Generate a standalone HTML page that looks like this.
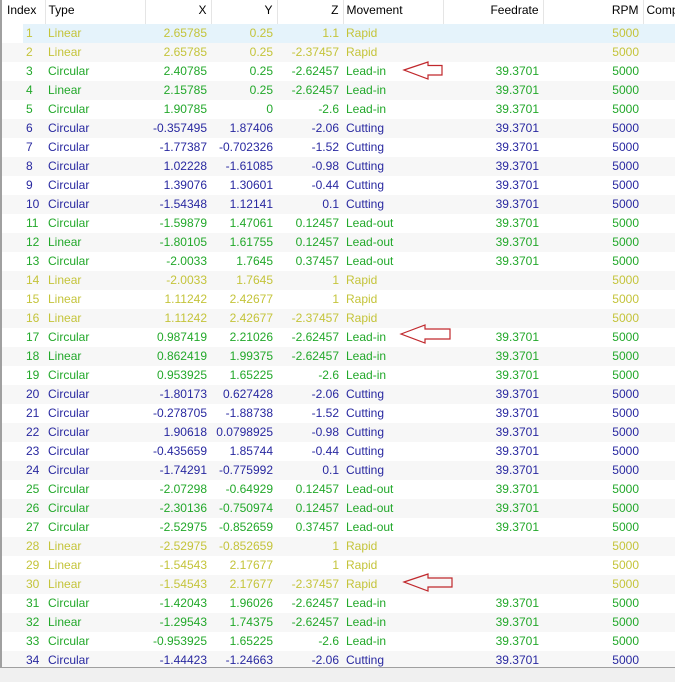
<!DOCTYPE html>
<html><head><style>
body{margin:0;width:675px;height:682px;background:#f0f0f0;overflow:hidden;font-family:"Liberation Sans",sans-serif;font-size:12px;position:relative}
#g{position:absolute;left:0;top:0;width:675px;height:668px;background:#fff;border-left:2px solid #a0a0a0;border-bottom:1px solid #a0a0a0;box-sizing:border-box;overflow:hidden}
table{border-collapse:collapse;table-layout:fixed;position:absolute;left:0;top:0;width:681px}
td,th{height:19px;padding:0;white-space:nowrap;overflow:hidden;line-height:19px}
th{height:24px;line-height:20px;vertical-align:top;font-weight:normal;color:#000;border-right:1px solid #e5e5e5;text-align:left;padding-left:3px}
th.r{text-align:right;padding-right:4px;padding-left:0}
td{text-align:right;padding-right:4px}
td.l{text-align:left;padding-left:3px;padding-right:0}
td.i{text-align:left;padding-left:24px;padding-right:0}
tr:nth-child(odd) td{background:#f7f7f7}
tr.sel td{background:#e5f3fb}
tr.sel td.i{background:linear-gradient(90deg,#fff 21px,#e5f3fb 21px)}
.Y td{color:#c4c43a}.G td{color:#22a82a}.B td{color:#2828a0}
svg{position:absolute;left:0;top:0}
</style></head><body><div id="g">
<table>
<colgroup><col style="width:43px"><col style="width:100px"><col style="width:66px"><col style="width:66px"><col style="width:66px"><col style="width:100px"><col style="width:100px"><col style="width:100px"><col style="width:40px"></colgroup>
<tr><th style="padding-left:5px">Index</th><th>Type</th><th class="r">X</th><th class="r">Y</th><th class="r">Z</th><th>Movement</th><th class="r">Feedrate</th><th class="r">RPM</th><th>Comp</th></tr>
<tr class="Y sel"><td class="i">1</td><td class="l">Linear</td><td>2.65785</td><td>0.25</td><td>1.1</td><td class="l">Rapid</td><td></td><td>5000</td><td></td></tr>
<tr class="Y"><td class="i">2</td><td class="l">Linear</td><td>2.65785</td><td>0.25</td><td>-2.37457</td><td class="l">Rapid</td><td></td><td>5000</td><td></td></tr>
<tr class="G"><td class="i">3</td><td class="l">Circular</td><td>2.40785</td><td>0.25</td><td>-2.62457</td><td class="l">Lead-in</td><td>39.3701</td><td>5000</td><td></td></tr>
<tr class="G"><td class="i">4</td><td class="l">Linear</td><td>2.15785</td><td>0.25</td><td>-2.62457</td><td class="l">Lead-in</td><td>39.3701</td><td>5000</td><td></td></tr>
<tr class="G"><td class="i">5</td><td class="l">Circular</td><td>1.90785</td><td>0</td><td>-2.6</td><td class="l">Lead-in</td><td>39.3701</td><td>5000</td><td></td></tr>
<tr class="B"><td class="i">6</td><td class="l">Circular</td><td>-0.357495</td><td>1.87406</td><td>-2.06</td><td class="l">Cutting</td><td>39.3701</td><td>5000</td><td></td></tr>
<tr class="B"><td class="i">7</td><td class="l">Circular</td><td>-1.77387</td><td>-0.702326</td><td>-1.52</td><td class="l">Cutting</td><td>39.3701</td><td>5000</td><td></td></tr>
<tr class="B"><td class="i">8</td><td class="l">Circular</td><td>1.02228</td><td>-1.61085</td><td>-0.98</td><td class="l">Cutting</td><td>39.3701</td><td>5000</td><td></td></tr>
<tr class="B"><td class="i">9</td><td class="l">Circular</td><td>1.39076</td><td>1.30601</td><td>-0.44</td><td class="l">Cutting</td><td>39.3701</td><td>5000</td><td></td></tr>
<tr class="B"><td class="i">10</td><td class="l">Circular</td><td>-1.54348</td><td>1.12141</td><td>0.1</td><td class="l">Cutting</td><td>39.3701</td><td>5000</td><td></td></tr>
<tr class="G"><td class="i">11</td><td class="l">Circular</td><td>-1.59879</td><td>1.47061</td><td>0.12457</td><td class="l">Lead-out</td><td>39.3701</td><td>5000</td><td></td></tr>
<tr class="G"><td class="i">12</td><td class="l">Linear</td><td>-1.80105</td><td>1.61755</td><td>0.12457</td><td class="l">Lead-out</td><td>39.3701</td><td>5000</td><td></td></tr>
<tr class="G"><td class="i">13</td><td class="l">Circular</td><td>-2.0033</td><td>1.7645</td><td>0.37457</td><td class="l">Lead-out</td><td>39.3701</td><td>5000</td><td></td></tr>
<tr class="Y"><td class="i">14</td><td class="l">Linear</td><td>-2.0033</td><td>1.7645</td><td>1</td><td class="l">Rapid</td><td></td><td>5000</td><td></td></tr>
<tr class="Y"><td class="i">15</td><td class="l">Linear</td><td>1.11242</td><td>2.42677</td><td>1</td><td class="l">Rapid</td><td></td><td>5000</td><td></td></tr>
<tr class="Y"><td class="i">16</td><td class="l">Linear</td><td>1.11242</td><td>2.42677</td><td>-2.37457</td><td class="l">Rapid</td><td></td><td>5000</td><td></td></tr>
<tr class="G"><td class="i">17</td><td class="l">Circular</td><td>0.987419</td><td>2.21026</td><td>-2.62457</td><td class="l">Lead-in</td><td>39.3701</td><td>5000</td><td></td></tr>
<tr class="G"><td class="i">18</td><td class="l">Linear</td><td>0.862419</td><td>1.99375</td><td>-2.62457</td><td class="l">Lead-in</td><td>39.3701</td><td>5000</td><td></td></tr>
<tr class="G"><td class="i">19</td><td class="l">Circular</td><td>0.953925</td><td>1.65225</td><td>-2.6</td><td class="l">Lead-in</td><td>39.3701</td><td>5000</td><td></td></tr>
<tr class="B"><td class="i">20</td><td class="l">Circular</td><td>-1.80173</td><td>0.627428</td><td>-2.06</td><td class="l">Cutting</td><td>39.3701</td><td>5000</td><td></td></tr>
<tr class="B"><td class="i">21</td><td class="l">Circular</td><td>-0.278705</td><td>-1.88738</td><td>-1.52</td><td class="l">Cutting</td><td>39.3701</td><td>5000</td><td></td></tr>
<tr class="B"><td class="i">22</td><td class="l">Circular</td><td>1.90618</td><td>0.0798925</td><td>-0.98</td><td class="l">Cutting</td><td>39.3701</td><td>5000</td><td></td></tr>
<tr class="B"><td class="i">23</td><td class="l">Circular</td><td>-0.435659</td><td>1.85744</td><td>-0.44</td><td class="l">Cutting</td><td>39.3701</td><td>5000</td><td></td></tr>
<tr class="B"><td class="i">24</td><td class="l">Circular</td><td>-1.74291</td><td>-0.775992</td><td>0.1</td><td class="l">Cutting</td><td>39.3701</td><td>5000</td><td></td></tr>
<tr class="G"><td class="i">25</td><td class="l">Circular</td><td>-2.07298</td><td>-0.64929</td><td>0.12457</td><td class="l">Lead-out</td><td>39.3701</td><td>5000</td><td></td></tr>
<tr class="G"><td class="i">26</td><td class="l">Circular</td><td>-2.30136</td><td>-0.750974</td><td>0.12457</td><td class="l">Lead-out</td><td>39.3701</td><td>5000</td><td></td></tr>
<tr class="G"><td class="i">27</td><td class="l">Circular</td><td>-2.52975</td><td>-0.852659</td><td>0.37457</td><td class="l">Lead-out</td><td>39.3701</td><td>5000</td><td></td></tr>
<tr class="Y"><td class="i">28</td><td class="l">Linear</td><td>-2.52975</td><td>-0.852659</td><td>1</td><td class="l">Rapid</td><td></td><td>5000</td><td></td></tr>
<tr class="Y"><td class="i">29</td><td class="l">Linear</td><td>-1.54543</td><td>2.17677</td><td>1</td><td class="l">Rapid</td><td></td><td>5000</td><td></td></tr>
<tr class="Y"><td class="i">30</td><td class="l">Linear</td><td>-1.54543</td><td>2.17677</td><td>-2.37457</td><td class="l">Rapid</td><td></td><td>5000</td><td></td></tr>
<tr class="G"><td class="i">31</td><td class="l">Circular</td><td>-1.42043</td><td>1.96026</td><td>-2.62457</td><td class="l">Lead-in</td><td>39.3701</td><td>5000</td><td></td></tr>
<tr class="G"><td class="i">32</td><td class="l">Linear</td><td>-1.29543</td><td>1.74375</td><td>-2.62457</td><td class="l">Lead-in</td><td>39.3701</td><td>5000</td><td></td></tr>
<tr class="G"><td class="i">33</td><td class="l">Circular</td><td>-0.953925</td><td>1.65225</td><td>-2.6</td><td class="l">Lead-in</td><td>39.3701</td><td>5000</td><td></td></tr>
<tr class="B"><td class="i">34</td><td class="l">Circular</td><td>-1.44423</td><td>-1.24663</td><td>-2.06</td><td class="l">Cutting</td><td>39.3701</td><td>5000</td><td></td></tr>
</table>
</div>
<svg width="675" height="682" viewBox="0 0 675 682">
<g fill="none" stroke="#c0282c" stroke-width="1.2">
<path d="M404 70 L428 62 L428 65.5 L442 65.5 L442 75 L428 75 L428 79 Z"/>
<path d="M401 334 L425 325 L425 329 L450 329 L450 339 L425 339 L425 343 Z"/>
<path d="M404 582 L428 574 L428 578 L452 578 L452 587 L428 587 L428 591 Z"/>
</g></svg>
</body></html>
